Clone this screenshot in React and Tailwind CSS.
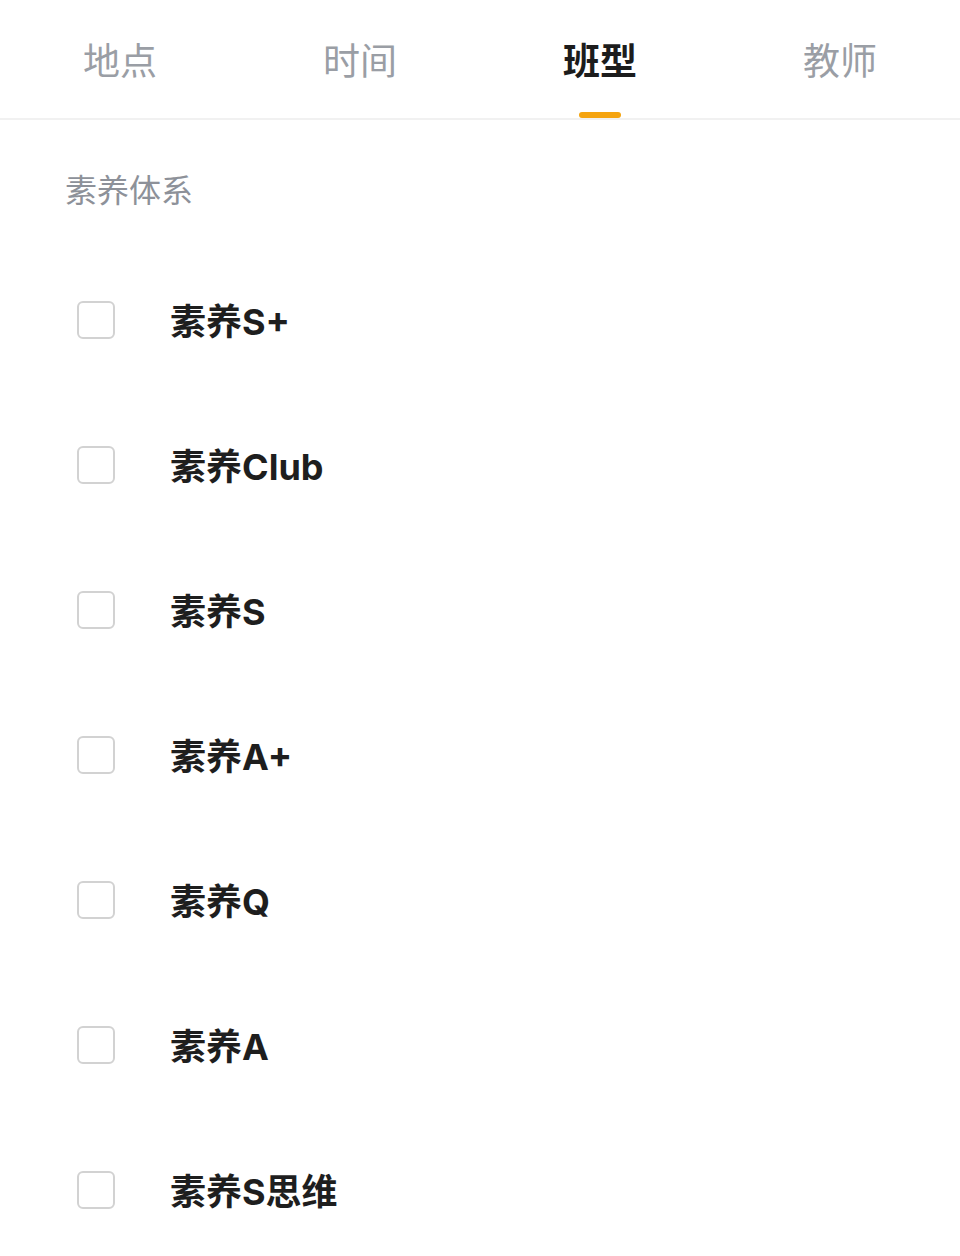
const tabs = ['地点', '时间', '班型', '教师'];
const items = ['素养S+', '素养Club', '素养S', '素养A+', '素养Q', '素养A', '素养S思维'];

function Tabs({ active }) {
  return (
    <div className="grid grid-cols-4 h-[120px] border-b-2 border-[#f1f1f1]">
      {tabs.map((tab, index) => (
        <div key={index} className="relative flex items-center justify-center">
          <span
            className={`text-[37px] leading-none ${
              index === active ? 'font-bold text-[#1c1c1c]' : 'text-[#9a9ea5]'
            }`}
          >
            {tab}
          </span>
          {index === active && (
            <div className="absolute bottom-0 left-1/2 -translate-x-1/2 w-[42px] h-[6px] rounded-full bg-[#f5a40f]" />
          )}
        </div>
      ))}
    </div>
  );
}

function CheckRow({ label }) {
  return (
    <div className="flex items-center h-[145px] pl-[77px]">
      <div className="w-[38px] h-[38px] rounded-[6px] border-2 border-[#d2d2d2] bg-white" />
      <span
        className="ml-[55px] pt-[4px] text-[36px] font-bold text-[#1e1e1e] leading-none"
        style={{ fontFamily: 'Inter, "Noto Sans CJK SC", sans-serif' }}
      >
        {label}
      </span>
    </div>
  );
}

export default function App() {
  return (
    <div
      className="w-[960px] h-[1256px] overflow-hidden bg-white"
      style={{ fontFamily: '"Noto Sans CJK SC", "Noto Sans", sans-serif' }}
    >
      <Tabs active={2} />
      <div className="pt-[48px] pl-[65px] text-[32px] leading-[40px] text-[#8d9199]">素养体系</div>
      <div className="mt-[39px]">
        {items.map((item, index) => (
          <CheckRow key={index} label={item} />
        ))}
      </div>
    </div>
  );
}
